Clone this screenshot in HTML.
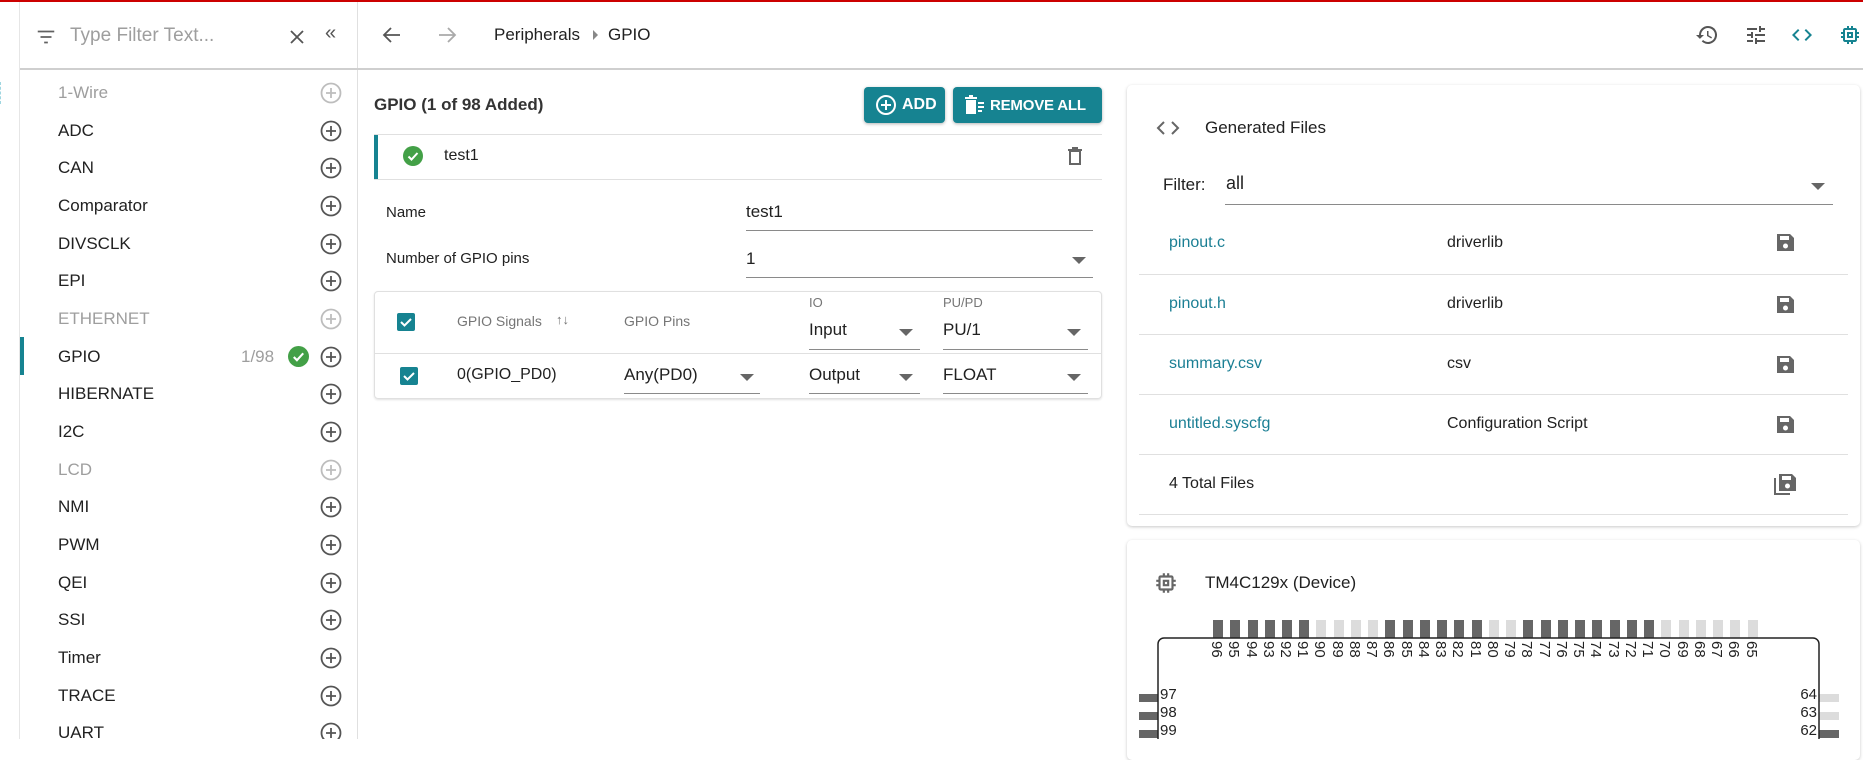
<!DOCTYPE html>
<html><head><meta charset="utf-8"><style>
*{box-sizing:border-box;margin:0;padding:0}
body{width:1863px;height:739px;overflow:hidden;background:#fff;font-family:"Liberation Sans",sans-serif;color:#212121;position:relative}
.a{position:absolute;white-space:nowrap}
.li{position:absolute;left:58px;font-size:17px;line-height:20px}
.dis{color:#9e9e9e}
.ul{position:absolute;height:1px;background:#8a8a8a}
.dd{position:absolute;width:0;height:0;border-left:7px solid transparent;border-right:7px solid transparent;border-top:7px solid #666}
.sep{position:absolute;left:1139px;width:709px;height:1px;background:#e0e0e0}
.fl{position:absolute;left:1169px;font-size:16px;color:#1b7f94}
.ft{position:absolute;left:1447px;font-size:16px}
.cb{position:absolute;width:18px;height:18px;background:#168391;border-radius:2px}
</style></head><body>
<div class="a" style="left:0;top:0;width:1863px;height:2px;background:#cc0000"></div>
<div class="a" style="left:0;top:82px;width:2px;height:22px;border-left:1px dashed #9fd6e0"></div>
<div class="a" style="left:19px;top:2px;width:1px;height:737px;background:#e6e6e6"></div>
<div class="a" style="left:357px;top:2px;width:1px;height:737px;background:#e0e0e0"></div>
<div class="a" style="left:20px;top:68px;width:1843px;height:2px;background:#cfcfcf"></div>

<svg class="a" style="left:35px;top:26px" width="22" height="22" viewBox="0 0 24 24"><path d="M3 6h18M6 12h12M10 18h4" stroke="#616161" stroke-width="2"/></svg>
<div class="a" style="left:70px;top:25px;font-size:19px;color:#9e9e9e">Type Filter Text...</div>
<svg class="a" style="left:289px;top:29px" width="16" height="16" viewBox="0 0 16 16"><path d="M2 2L14 14M14 2L2 14" stroke="#555" stroke-width="1.8"/></svg>
<div class="a" style="left:325px;top:22px;font-size:20px;color:#555">«</div>

<div class="li dis" style="top:83px">1-Wire</div>
<div class="li" style="top:121px">ADC</div>
<div class="li" style="top:158px">CAN</div>
<div class="li" style="top:196px">Comparator</div>
<div class="li" style="top:234px">DIVSCLK</div>
<div class="li" style="top:271px">EPI</div>
<div class="li dis" style="top:309px">ETHERNET</div>
<div class="li" style="top:347px">GPIO</div>
<div class="li" style="top:384px">HIBERNATE</div>
<div class="li" style="top:422px">I2C</div>
<div class="li dis" style="top:460px">LCD</div>
<div class="li" style="top:497px">NMI</div>
<div class="li" style="top:535px">PWM</div>
<div class="li" style="top:573px">QEI</div>
<div class="li" style="top:610px">SSI</div>
<div class="li" style="top:648px">Timer</div>
<div class="li" style="top:686px">TRACE</div>
<div class="li" style="top:723px">UART</div>
<div class="a" style="left:20px;top:337px;width:4px;height:38px;background:#168391"></div>
<div class="a" style="left:241px;top:347px;font-size:17px;color:#9e9e9e">1/98</div>
<svg class="a" style="left:288px;top:346px" width="21" height="21" viewBox="0 0 20 20"><circle cx="10" cy="10" r="10" fill="#43a047"/><path d="M5.5 10.5l3 3 6-6.5" stroke="#fff" stroke-width="2" fill="none"/></svg>
<svg class="a" style="left:0;top:0" width="357" height="739">
<g fill="none" stroke-width="1.8">
<g stroke="#bdbdbd"><circle cx="331" cy="93" r="9.5"/><path d="M331 88v10M326 93h10"/><circle cx="331" cy="319" r="9.5"/><path d="M331 314v10M326 319h10"/><circle cx="331" cy="470" r="9.5"/><path d="M331 465v10M326 470h10"/></g>
<g stroke="#555">
<circle cx="331" cy="131" r="9.5"/><path d="M331 126v10M326 131h10"/>
<circle cx="331" cy="168" r="9.5"/><path d="M331 163v10M326 168h10"/>
<circle cx="331" cy="206" r="9.5"/><path d="M331 201v10M326 206h10"/>
<circle cx="331" cy="244" r="9.5"/><path d="M331 239v10M326 244h10"/>
<circle cx="331" cy="281" r="9.5"/><path d="M331 276v10M326 281h10"/>
<circle cx="331" cy="357" r="9.5"/><path d="M331 352v10M326 357h10"/>
<circle cx="331" cy="394" r="9.5"/><path d="M331 389v10M326 394h10"/>
<circle cx="331" cy="432" r="9.5"/><path d="M331 427v10M326 432h10"/>
<circle cx="331" cy="507" r="9.5"/><path d="M331 502v10M326 507h10"/>
<circle cx="331" cy="545" r="9.5"/><path d="M331 540v10M326 545h10"/>
<circle cx="331" cy="583" r="9.5"/><path d="M331 578v10M326 583h10"/>
<circle cx="331" cy="620" r="9.5"/><path d="M331 615v10M326 620h10"/>
<circle cx="331" cy="658" r="9.5"/><path d="M331 653v10M326 658h10"/>
<circle cx="331" cy="696" r="9.5"/><path d="M331 691v10M326 696h10"/>
<circle cx="331" cy="733" r="9.5"/><path d="M331 728v10M326 733h10"/>
</g></g></svg>

<svg class="a" style="left:382px;top:25px" width="20" height="20" viewBox="0 0 20 20"><path d="M18 10H3M9 3l-7 7 7 7" stroke="#555" stroke-width="1.8" fill="none"/></svg>
<svg class="a" style="left:437px;top:25px" width="20" height="20" viewBox="0 0 20 20"><path d="M2 10h15M11 3l7 7-7 7" stroke="#aaa" stroke-width="1.8" fill="none"/></svg>
<div class="a" style="left:494px;top:25px;font-size:17px">Peripherals</div>
<div class="a" style="left:593px;top:30px;width:0;height:0;border-top:5px solid transparent;border-bottom:5px solid transparent;border-left:5px solid #888"></div>
<div class="a" style="left:608px;top:25px;font-size:17px">GPIO</div>
<svg class="a" style="left:1695px;top:23px" width="24" height="24" viewBox="0 0 24 24"><path d="M13 3a9 9 0 0 0-9 9H1l3.9 3.9L9 12H6a7 7 0 1 1 2.1 5l-1.4 1.4A9 9 0 1 0 13 3zm-1 5v5l4.3 2.5.7-1.2-3.5-2.1V8z" fill="#555"/></svg>
<svg class="a" style="left:1744px;top:23px" width="24" height="24" viewBox="0 0 24 24"><path d="M3 17v2h6v-2H3zM3 5v2h10V5H3zm10 16v-2h8v-2h-8v-2h-2v6h2zM7 9v2H3v2h4v2h2V9H7zm14 4v-2H11v2h10zm-6-4h2V7h4V5h-4V3h-2v6z" fill="#555"/></svg>
<svg class="a" style="left:1790px;top:23px" width="24" height="24" viewBox="0 0 24 24"><path d="M9.4 16.6L4.8 12l4.6-4.6L8 6l-6 6 6 6zm5.2 0l4.6-4.6-4.6-4.6L16 6l6 6-6 6z" fill="#168391"/></svg>
<svg class="a" style="left:1838px;top:23px" width="24" height="24" viewBox="0 0 24 24"><path d="M15 9H9v6h6V9zm-2 4h-2v-2h2v2zm8-2V9h-2V7c0-1.1-.9-2-2-2h-2V3h-2v2h-2V3H9v2H7c-1.1 0-2 .9-2 2v2H3v2h2v2H3v2h2v2c0 1.1.9 2 2 2h2v2h2v-2h2v2h2v-2h2c1.1 0 2-.9 2-2v-2h2v-2h-2v-2h2zm-4 6H7V7h10v10z" fill="#168391"/></svg>

<div class="a" style="left:374px;top:95px;font-size:17px;font-weight:bold;color:#333">GPIO (1 of 98 Added)</div>
<div class="a" style="left:864px;top:87px;width:81px;height:36px;background:#168391;border-radius:4px;box-shadow:0 1px 3px rgba(0,0,0,.3)"></div>
<svg class="a" style="left:875px;top:94px" width="22" height="22" viewBox="0 0 22 22"><circle cx="11" cy="11" r="9" stroke="#fff" stroke-width="2" fill="none"/><path d="M11 6v10M6 11h10" stroke="#fff" stroke-width="2"/></svg>
<div class="a" style="left:902px;top:96px;font-size:16px;font-weight:bold;color:#fff">ADD</div>
<div class="a" style="left:953px;top:87px;width:149px;height:36px;background:#168391;border-radius:4px;box-shadow:0 1px 3px rgba(0,0,0,.3)"></div>
<svg class="a" style="left:964px;top:95px" width="22" height="20" viewBox="0 0 22 20"><path d="M1 3h12M5 1h4" stroke="#fff" stroke-width="2"/><rect x="2" y="5" width="10" height="14" fill="#fff"/><path d="M14 8h6M14 12h6M14 16h4" stroke="#fff" stroke-width="2"/></svg>
<div class="a" style="left:990px;top:97px;font-size:15px;font-weight:bold;color:#fff;letter-spacing:-0.2px">REMOVE ALL</div>

<div class="a" style="left:374px;top:134px;width:728px;height:1px;background:#e0e0e0"></div>
<div class="a" style="left:374px;top:135px;width:4px;height:44px;background:#168391"></div>
<div class="a" style="left:374px;top:179px;width:728px;height:1px;background:#e0e0e0"></div>
<svg class="a" style="left:403px;top:146px" width="20" height="20" viewBox="0 0 20 20"><circle cx="10" cy="10" r="10" fill="#43a047"/><path d="M5.5 10.5l3 3 6-6.5" stroke="#fff" stroke-width="2" fill="none"/></svg>
<div class="a" style="left:444px;top:147px;font-size:16px">test1</div>
<svg class="a" style="left:1066px;top:146px" width="18" height="20" viewBox="0 0 18 20"><path d="M2 4h14M6 2h6" stroke="#666" stroke-width="2"/><rect x="4" y="5" width="10" height="13" fill="none" stroke="#666" stroke-width="2"/></svg>

<div class="a" style="left:386px;top:204px;font-size:15px">Name</div>
<div class="a" style="left:746px;top:202px;font-size:17px">test1</div>
<div class="ul" style="left:746px;top:230px;width:347px"></div>
<div class="a" style="left:386px;top:250px;font-size:15px">Number of GPIO pins</div>
<div class="a" style="left:746px;top:249px;font-size:17px">1</div>
<div class="dd" style="left:1072px;top:257px"></div>
<div class="ul" style="left:746px;top:277px;width:347px"></div>

<div class="a" style="left:374px;top:291px;width:728px;height:108px;border:1px solid #e0e0e0;border-radius:4px;box-shadow:0 1px 2px rgba(0,0,0,.12)"></div>
<div class="a" style="left:375px;top:353px;width:726px;height:1px;background:#e0e0e0"></div>
<div class="cb" style="left:397px;top:313px"></div><svg class="a" style="left:397px;top:313px" width="18" height="18"><path d="M4 9l3.5 3.5L14 6" stroke="#fff" stroke-width="2" fill="none"/></svg>
<div class="cb" style="left:400px;top:367px"></div><svg class="a" style="left:400px;top:367px" width="18" height="18"><path d="M4 9l3.5 3.5L14 6" stroke="#fff" stroke-width="2" fill="none"/></svg>
<div class="a" style="left:457px;top:313px;font-size:14px;color:#757575">GPIO Signals</div>
<div class="a" style="left:556px;top:312px;font-size:13px;color:#757575">↑↓</div>
<div class="a" style="left:624px;top:313px;font-size:14px;color:#757575">GPIO Pins</div>
<div class="a" style="left:809px;top:295px;font-size:13px;color:#757575">IO</div>
<div class="a" style="left:809px;top:320px;font-size:17px">Input</div>
<div class="dd" style="left:899px;top:329px"></div>
<div class="ul" style="left:809px;top:349px;width:111px"></div>
<div class="a" style="left:943px;top:295px;font-size:13px;color:#757575">PU/PD</div>
<div class="a" style="left:943px;top:320px;font-size:17px">PU/1</div>
<div class="dd" style="left:1067px;top:329px"></div>
<div class="ul" style="left:943px;top:349px;width:145px"></div>
<div class="a" style="left:457px;top:366px;font-size:16px">0(GPIO_PD0)</div>
<div class="a" style="left:624px;top:365px;font-size:17px">Any(PD0)</div>
<div class="dd" style="left:740px;top:374px"></div>
<div class="ul" style="left:624px;top:393px;width:136px"></div>
<div class="a" style="left:809px;top:365px;font-size:17px">Output</div>
<div class="dd" style="left:899px;top:374px"></div>
<div class="ul" style="left:809px;top:393px;width:111px"></div>
<div class="a" style="left:943px;top:365px;font-size:17px">FLOAT</div>
<div class="dd" style="left:1067px;top:374px"></div>
<div class="ul" style="left:943px;top:393px;width:145px"></div>

<div class="a" style="left:1127px;top:85px;width:733px;height:441px;border-radius:5px;box-shadow:0 1px 3px rgba(0,0,0,.22)"></div>
<svg class="a" style="left:1155px;top:118px" width="26" height="20" viewBox="0 0 26 20"><path d="M9 4L3 10l6 6M17 4l6 6-6 6" stroke="#666" stroke-width="2" fill="none"/></svg>
<div class="a" style="left:1205px;top:118px;font-size:17px">Generated Files</div>
<div class="a" style="left:1163px;top:175px;font-size:17px">Filter:</div>
<div class="a" style="left:1226px;top:173px;font-size:18px">all</div>
<div class="dd" style="left:1811px;top:183px"></div>
<div class="ul" style="left:1225px;top:204px;width:608px"></div>
<div class="fl" style="top:234px">pinout.c</div><div class="ft" style="top:234px">driverlib</div>
<div class="sep" style="top:274px"></div>
<div class="fl" style="top:295px">pinout.h</div><div class="ft" style="top:295px">driverlib</div>
<div class="sep" style="top:334px"></div>
<div class="fl" style="top:355px">summary.csv</div><div class="ft" style="top:355px">csv</div>
<div class="sep" style="top:394px"></div>
<div class="fl" style="top:415px">untitled.syscfg</div><div class="ft" style="top:415px">Configuration Script</div>
<div class="sep" style="top:454px"></div>
<div class="a" style="left:1169px;top:475px;font-size:16px">4 Total Files</div>
<div class="sep" style="top:514px"></div>
<svg class="a" style="left:0;top:0" width="1863" height="739"><g fill="#666">
<path d="M1777 234h13l4 4v13h-17z"/><path d="M1777 296h13l4 4v13h-17z"/><path d="M1777 356h13l4 4v13h-17z"/><path d="M1777 416h13l4 4v13h-17z"/>
<path d="M1779 474h13l4 4v13h-17z"/><path d="M1775 478v16h15" stroke="#666" stroke-width="2" fill="none"/>
</g><g fill="#fff"><rect x="1780" y="236" width="9" height="4"/><circle cx="1785.5" cy="246" r="2.5"/><rect x="1780" y="298" width="9" height="4"/><circle cx="1785.5" cy="308" r="2.5"/><rect x="1780" y="358" width="9" height="4"/><circle cx="1785.5" cy="368" r="2.5"/><rect x="1780" y="418" width="9" height="4"/><circle cx="1785.5" cy="428" r="2.5"/><rect x="1782" y="476" width="9" height="4"/><circle cx="1787.5" cy="486" r="2.5"/></g></svg>

<div class="a" style="left:1127px;top:540px;width:733px;height:220px;border-radius:5px;box-shadow:0 1px 3px rgba(0,0,0,.22)"></div>
<svg class="a" style="left:1153px;top:570px" width="26" height="26" viewBox="0 0 24 24"><path d="M15 9H9v6h6V9zm-2 4h-2v-2h2v2zm8-2V9h-2V7c0-1.1-.9-2-2-2h-2V3h-2v2h-2V3H9v2H7c-1.1 0-2 .9-2 2v2H3v2h2v2H3v2h2v2c0 1.1.9 2 2 2h2v2h2v-2h2v2h2v-2h2c1.1 0 2-.9 2-2v-2h2v-2h-2v-2h2zm-4 6H7V7h10v10z" fill="#666"/></svg>
<div class="a" style="left:1205px;top:573px;font-size:17px">TM4C129x (Device)</div>
<svg class="a" style="left:0;top:0" width="1863" height="739" font-family="Liberation Sans" font-size="15">
<g fill="#666">
<rect x="1213" y="620" width="10" height="18"/><rect x="1230" y="620" width="10" height="18"/><rect x="1248" y="620" width="10" height="18"/><rect x="1265" y="620" width="10" height="18"/><rect x="1282" y="620" width="10" height="18"/><rect x="1299" y="620" width="10" height="18"/>
<rect x="1385" y="620" width="10" height="18"/><rect x="1403" y="620" width="10" height="18"/><rect x="1420" y="620" width="10" height="18"/><rect x="1437" y="620" width="10" height="18"/><rect x="1454" y="620" width="10" height="18"/><rect x="1472" y="620" width="10" height="18"/>
<rect x="1523" y="620" width="10" height="18"/><rect x="1541" y="620" width="10" height="18"/><rect x="1558" y="620" width="10" height="18"/><rect x="1575" y="620" width="10" height="18"/><rect x="1592" y="620" width="10" height="18"/><rect x="1610" y="620" width="10" height="18"/><rect x="1627" y="620" width="10" height="18"/><rect x="1644" y="620" width="10" height="18"/>
<rect x="1139" y="694" width="19" height="8"/><rect x="1139" y="712" width="19" height="8"/><rect x="1139" y="730" width="19" height="8"/><rect x="1819" y="730" width="20" height="8"/>
</g>
<g fill="#dcdcdc">
<rect x="1316" y="620" width="10" height="18"/><rect x="1334" y="620" width="10" height="18"/><rect x="1351" y="620" width="10" height="18"/><rect x="1368" y="620" width="10" height="18"/>
<rect x="1489" y="620" width="10" height="18"/><rect x="1506" y="620" width="10" height="18"/>
<rect x="1661" y="620" width="10" height="18"/><rect x="1679" y="620" width="10" height="18"/><rect x="1696" y="620" width="10" height="18"/><rect x="1713" y="620" width="10" height="18"/><rect x="1730" y="620" width="10" height="18"/><rect x="1748" y="620" width="10" height="18"/>
<rect x="1819" y="694" width="20" height="8"/><rect x="1819" y="712" width="20" height="8"/>
</g>
<path d="M1158 760V644a6 6 0 0 1 6-6h649a6 6 0 0 1 6 6v116" fill="none" stroke="#222" stroke-width="1.5"/>
<g fill="#222">
<text transform="translate(1212,641) rotate(90)">96</text><text transform="translate(1229,641) rotate(90)">95</text><text transform="translate(1247,641) rotate(90)">94</text><text transform="translate(1264,641) rotate(90)">93</text><text transform="translate(1281,641) rotate(90)">92</text><text transform="translate(1298,641) rotate(90)">91</text><text transform="translate(1315,641) rotate(90)">90</text><text transform="translate(1333,641) rotate(90)">89</text><text transform="translate(1350,641) rotate(90)">88</text><text transform="translate(1367,641) rotate(90)">87</text><text transform="translate(1384,641) rotate(90)">86</text><text transform="translate(1402,641) rotate(90)">85</text><text transform="translate(1419,641) rotate(90)">84</text><text transform="translate(1436,641) rotate(90)">83</text><text transform="translate(1453,641) rotate(90)">82</text><text transform="translate(1471,641) rotate(90)">81</text><text transform="translate(1488,641) rotate(90)">80</text><text transform="translate(1505,641) rotate(90)">79</text><text transform="translate(1522,641) rotate(90)">78</text><text transform="translate(1540,641) rotate(90)">77</text><text transform="translate(1557,641) rotate(90)">76</text><text transform="translate(1574,641) rotate(90)">75</text><text transform="translate(1591,641) rotate(90)">74</text><text transform="translate(1609,641) rotate(90)">73</text><text transform="translate(1626,641) rotate(90)">72</text><text transform="translate(1643,641) rotate(90)">71</text><text transform="translate(1660,641) rotate(90)">70</text><text transform="translate(1678,641) rotate(90)">69</text><text transform="translate(1695,641) rotate(90)">68</text><text transform="translate(1712,641) rotate(90)">67</text><text transform="translate(1729,641) rotate(90)">66</text><text transform="translate(1747,641) rotate(90)">65</text>
<text x="1160" y="699">97</text><text x="1160" y="717">98</text><text x="1160" y="735">99</text>
<text x="1817" y="699" text-anchor="end">64</text><text x="1817" y="717" text-anchor="end">63</text><text x="1817" y="735" text-anchor="end">62</text>
</g></svg>
</body></html>
